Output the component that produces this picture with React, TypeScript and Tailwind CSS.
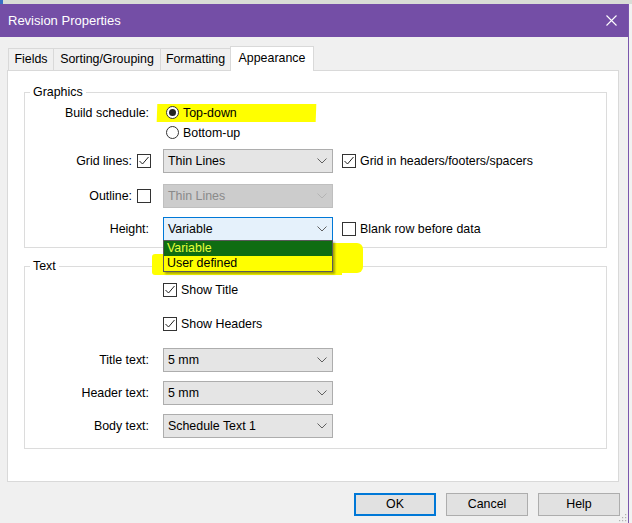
import type { ReactNode } from "react";

function Chevron({ disabled }: { disabled?: boolean }) {
  return (
    <svg width="10" height="6" viewBox="0 0 10 6" className="shrink-0">
      <path d="M0.5 0.5 L5 5 L9.5 0.5" fill="none" stroke={disabled ? "#b4b4b4" : "#606060"} strokeWidth="1" />
    </svg>
  );
}

function Check({ checked }: { checked?: boolean }) {
  return (
    <div className="w-[14px] h-[14px] border border-[#333333] bg-white shrink-0 flex items-center justify-center">
      {checked && (
        <svg width="12" height="12" viewBox="0 0 12 12">
          <path d="M1.5 6 L4.5 9 L10.5 2" fill="none" stroke="#222222" strokeWidth="1" />
        </svg>
      )}
    </div>
  );
}

function Radio({ selected }: { selected?: boolean }) {
  return (
    <div className="w-[13px] h-[13px] rounded-full border border-[#333333] bg-white shrink-0 flex items-center justify-center">
      {selected && <div className="w-[7px] h-[7px] rounded-full bg-[#222222]" />}
    </div>
  );
}

function Select({ value, variant = "normal" }: { value: string; variant?: "normal" | "disabled" | "focus" }) {
  const box =
    variant === "disabled"
      ? "bg-[#cccccc] border-[#bfbfbf] text-[#8a8a8a]"
      : variant === "focus"
      ? "bg-[#e5f1fb] border-[#0078d7] text-black"
      : "bg-[#e5e5e5] border-[#adadad] text-black";
  return (
    <div className={`w-[170px] h-[24px] border ${box} flex items-center justify-between pl-[4px] pr-[5px]`}>
      <span>{value}</span>
      <Chevron disabled={variant === "disabled"} />
    </div>
  );
}

function Row({ label, box, children, className = "" }: { label?: string; box?: ReactNode; children: ReactNode; className?: string }) {
  return (
    <div className={`relative flex items-center ${className}`}>
      <div className={`w-[138px] shrink-0 flex items-center justify-end gap-[5px] ${box ? "pr-[12px]" : "pr-[14px]"}`}>
        {label && <span>{label}</span>}
        {box}
      </div>
      {children}
    </div>
  );
}

function Group({ title, children, className = "" }: { title: string; children: ReactNode; className?: string }) {
  return (
    <fieldset className={`ml-[16px] w-[583px] border border-[#dcdcdc] ${className}`}>
      <legend className="ml-[5px] px-[3px] leading-[16px]">{title}</legend>
      {children}
    </fieldset>
  );
}

const tabs = [
  { name: "Fields", w: "w-[46px]" },
  { name: "Sorting/Grouping", w: "w-[108px]" },
  { name: "Formatting", w: "w-[71px]" },
];

export default function App() {
  return (
    <div className="w-[632px] h-[523px] bg-[#f0f0f0] flex flex-col overflow-hidden font-['Liberation_Sans',Arial,sans-serif] text-[12.4px] text-black">
      <div className="h-[4px] shrink-0 bg-[#d9ddd6] flex">
        <div className="w-[3px] bg-[#3a6fc4]" />
      </div>
      <div className="flex flex-1">
        <div className="w-[629px] border-r border-[#7a56ad] flex flex-col relative">
          {/* title bar */}
          <div className="h-[33px] shrink-0 bg-[#744ea6] flex items-center justify-between pl-[8px] pr-[11px] text-white">
            <span className="text-[13px]">Revision Properties</span>
            <svg width="11" height="11" viewBox="0 0 11 11">
              <path d="M0.5 0.5 L10.5 10.5 M10.5 0.5 L0.5 10.5" stroke="#ffffff" strokeWidth="1.1" />
            </svg>
          </div>

          {/* tabs */}
          <div className="mt-[9px] ml-[8px] h-[24px] flex items-end">
            {tabs.map((t) => (
              <div
                key={t.name}
                className={`${t.w} h-[22px] border border-b-0 border-[#d9d9d9] -mr-px flex items-center justify-center bg-[#f0f0f0]`}
              >
                {t.name}
              </div>
            ))}
            <div className="w-[84px] h-[25px] -mb-px relative z-10 border border-b-0 border-[#d9d9d9] bg-white flex items-center justify-center pb-[2px]">
              Appearance
            </div>
          </div>

          {/* panel */}
          <div className="ml-[7px] w-[612px] h-[412px] bg-white border border-[#d9d9d9] flex flex-col">
            <Group title="Graphics" className="mt-[13px] pb-[6px]">
              <Row label="Build schedule:" className="mt-[3px] h-[20px]">
                <div className="absolute left-[132px] top-[1px] w-[159px] h-[18px] bg-[#ffff00] -skew-x-2" />
                <div className="relative flex items-center gap-[4px] ml-[3px]">
                  <Radio selected />
                  <span>Top-down</span>
                </div>
              </Row>
              <Row className="h-[20px]">
                <div className="flex items-center gap-[4px] ml-[3px]">
                  <Radio />
                  <span>Bottom-up</span>
                </div>
              </Row>
              <Row label="Grid lines:" box={<Check checked />} className="mt-[6px]">
                <Select value="Thin Lines" />
                <div className="ml-[9px] flex items-center gap-[4px]">
                  <Check checked />
                  <span>Grid in headers/footers/spacers</span>
                </div>
              </Row>
              <Row label="Outline:" box={<Check />} className="mt-[11px]">
                <Select value="Thin Lines" variant="disabled" />
              </Row>
              <Row label="Height:" className="mt-[9px] z-20">
                <div className="relative">
                  <Select value="Variable" variant="focus" />
                  {/* highlighter marks behind the open list */}
                  <div className="absolute left-[170px] top-[26px] w-[30px] h-[30px] bg-[#ffff00] rounded-r-[6px]" />
                  <div className="absolute left-[-11px] top-[37px] w-[190px] h-[21px] bg-[#ffff00] rounded-l-[3px]" />
                  {/* open dropdown list */}
                  <div className="absolute left-0 top-[23px] w-[170px] border border-[#5a5a5a] bg-white shadow-[2px_2px_2px_rgba(0,0,0,0.35)]">
                    <div className="h-[15px] leading-[15px] pl-[3px] bg-[#0f6d12] text-[#e6ff3a]">Variable</div>
                    <div className="h-[15px] leading-[15px] pl-[3px] bg-[#ffff00] text-black">User defined</div>
                  </div>
                </div>
                <div className="ml-[9px] flex items-center gap-[4px]">
                  <Check />
                  <span>Blank row before data</span>
                </div>
              </Row>
            </Group>

            <Group title="Text" className="mt-[10px] pb-[10px]">
              <Row className="mt-[8px] h-[16px]">
                <div className="flex items-center gap-[4px]">
                  <Check checked />
                  <span>Show Title</span>
                </div>
              </Row>
              <Row className="mt-[18px] h-[16px]">
                <div className="flex items-center gap-[4px]">
                  <Check checked />
                  <span>Show Headers</span>
                </div>
              </Row>
              <Row label="Title text:" className="mt-[16px]">
                <Select value="5 mm" />
              </Row>
              <Row label="Header text:" className="mt-[9px]">
                <Select value="5 mm" />
              </Row>
              <Row label="Body text:" className="mt-[9px]">
                <Select value="Schedule Text 1" />
              </Row>
            </Group>
          </div>

          {/* buttons */}
          <div className="mt-[11px] flex justify-end gap-[10px] pr-[8px]">
            <button className="w-[82px] h-[23px] bg-[#e1e1e1] border-2 border-[#0078d7]">OK</button>
            <button className="w-[82px] h-[23px] bg-[#e1e1e1] border border-[#adadad]">Cancel</button>
            <button className="w-[82px] h-[23px] bg-[#e1e1e1] border border-[#adadad]">Help</button>
          </div>

          <svg className="absolute right-[1px] bottom-[1px]" width="8" height="8" viewBox="0 0 8 8">
            <rect x="6" y="0" width="1.2" height="1.2" fill="#b0b0b0" />
            <rect x="3" y="3" width="1.2" height="1.2" fill="#b0b0b0" />
            <rect x="6" y="3" width="1.2" height="1.2" fill="#b0b0b0" />
            <rect x="0" y="6" width="1.2" height="1.2" fill="#b0b0b0" />
            <rect x="3" y="6" width="1.2" height="1.2" fill="#b0b0b0" />
            <rect x="6" y="6" width="1.2" height="1.2" fill="#b0b0b0" />
          </svg>
        </div>
        <div className="flex-1 bg-[#f2f2f2]" />
      </div>
    </div>
  );
}
